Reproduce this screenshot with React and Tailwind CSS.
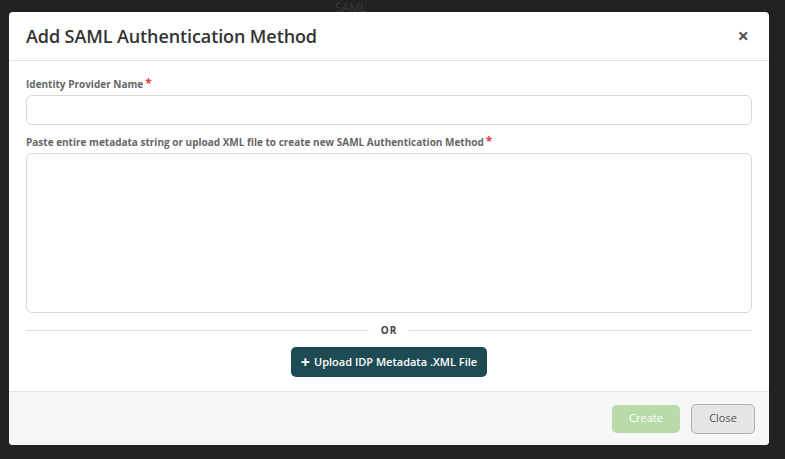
export default function App() {
  return (
    <div className="w-[785px] h-[459px] bg-[#222222] relative overflow-hidden" style={{ fontFamily: '"Open Sans", sans-serif' }}>
      <div className="absolute left-[335px] top-[-1px] text-[12px] text-[#3a3a3a]">SAML</div>
      <div className="absolute left-[9px] top-[12px] w-[760px] h-[433px] bg-white rounded-[4px] flex flex-col overflow-hidden">
        <div className="h-[49px] shrink-0 border-b border-[#e2e2e2] flex items-center justify-between pl-[17px] pr-[20px]">
          <h2 className="text-[18px] font-semibold text-[#333] tracking-[-0.1px]">Add SAML Authentication Method</h2>
          <span className="text-[20px] font-bold text-[#555] leading-none">×</span>
        </div>
        <div className="flex-1 px-[17px] pt-[16px] flex flex-col">
          <label className="text-[10px] font-bold text-[#666] leading-[14px] h-[18px]">Identity Provider Name<span className="text-[#e03a3a] text-[12px] ml-[2px]">*</span></label>
          <div className="h-[30px] border border-[#d9d9d9] rounded-[6px]"></div>
          <label className="mt-[10px] text-[10px] font-bold text-[#666] leading-[14px] h-[18px]">Paste entire metadata string or upload XML file to create new SAML Authentication Method<span className="text-[#e03a3a] text-[12px] ml-[2px]">*</span></label>
          <div className="h-[160px] border border-[#d9d9d9] rounded-[6px]"></div>
          <div className="mt-[10px] flex items-center gap-[12px]">
            <div className="flex-1 h-px bg-[#dedede]"></div>
            <span className="text-[10px] font-bold text-[#444] tracking-[1px]">OR</span>
            <div className="flex-1 h-px bg-[#dedede]"></div>
          </div>
          <div className="mt-[9px] flex justify-center">
            <button className="h-[30px] px-[10px] bg-[#1e4b53] text-white text-[11px] font-semibold rounded-[5px] flex items-center gap-[4px]">
              <span className="text-[16px] font-bold leading-none">+</span>Upload IDP Metadata .XML File
            </button>
          </div>
        </div>
        <div className="h-[54px] shrink-0 border-t border-[#e2e2e2] bg-[#f7f7f7] flex items-center justify-end gap-[11px] pr-[14px]">
          <button className="h-[28px] w-[68px] bg-[#b8dba9] text-white text-[11px] rounded-[5px]">Create</button>
          <button className="h-[30px] w-[64px] bg-[#e6e6e6] border border-[#b0b0b0] text-[#555] text-[11px] rounded-[5px]">Close</button>
        </div>
      </div>
    </div>
  );
}
